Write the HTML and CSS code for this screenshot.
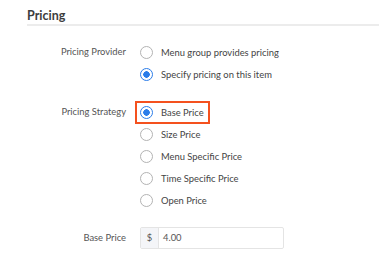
FILE: index.html
```html
<!DOCTYPE html>
<html>
<head>
<meta charset="utf-8">
<link rel="stylesheet" href="styles.css">
</head>
<body>
<section class="panel">
  <h2 class="title">Pricing</h2>
  <div class="field">
    <div class="label">Pricing Provider</div>
    <div class="options">
      <div class="option"><span class="radio"></span><span>Menu group provides pricing</span></div>
      <div class="option"><span class="radio checked"></span><span>Specify pricing on this item</span></div>
    </div>
  </div>
  <div class="field">
    <div class="label">Pricing Strategy</div>
    <div class="options">
      <div class="option highlight"><span class="radio checked"></span><span>Base Price</span></div>
      <div class="option"><span class="radio"></span><span>Size Price</span></div>
      <div class="option"><span class="radio"></span><span>Menu Specific Price</span></div>
      <div class="option"><span class="radio"></span><span>Time Specific Price</span></div>
      <div class="option"><span class="radio"></span><span>Open Price</span></div>
    </div>
  </div>
  <div class="field price-field">
    <div class="label">Base Price</div>
    <div class="input">
      <span class="prefix">$</span>
      <span class="value">4.00</span>
    </div>
  </div>
</section>
</body>
</html>
```

FILE: styles.css
```css
html, body {
  margin: 0;
  padding: 0;
  background: #fff;
}
body {
  font-family: Lato, "Open Sans", sans-serif;
  color: #444;
}
.panel {
  padding-left: 27px;
}
.title {
  margin: 0;
  height: 24px;
  line-height: 31px;
  font-size: 12.5px;
  font-weight: bold;
  color: #3d3d3d;
  border-bottom: 2px solid #ececec;
}
.field {
  display: grid;
  grid-template-columns: 99px 1fr;
  column-gap: 14px;
  margin-top: 16px;
}
.field:first-of-type {
  margin-top: 15px;
}
.label {
  text-align: right;
  font-size: 9.4px;
  line-height: 22px;
  color: #555;
}
.options {
  display: flex;
  flex-direction: column;
  align-items: flex-start;
}
.option {
  position: relative;
  display: flex;
  align-items: center;
  gap: 8px;
  height: 22px;
  font-size: 9.4px;
  color: #444;
}
.highlight::after {
  content: "";
  position: absolute;
  left: -5px;
  right: -6px;
  top: 0;
  bottom: -1px;
  border: 2px solid #f4511e;
}
.radio {
  box-sizing: border-box;
  width: 13px;
  height: 13px;
  border-radius: 50%;
  border: 1.5px solid #b3b3b3;
  background: #fff;
  flex: none;
}
.radio.checked {
  border-color: #2b7de9;
  background: radial-gradient(circle, #2b7de9 0 3px, #fff 3.5px);
}
.price-field {
  margin-top: 16px;
}
.input {
  display: flex;
  width: 144px;
  height: 22px;
  box-sizing: border-box;
  border: 1px solid #e4e4e4;
  border-radius: 2px;
  font-size: 9.4px;
  line-height: 20px;
}
.prefix {
  width: 17px;
  text-align: center;
  background: #f4f5f8;
  border-right: 1px solid #e4e4e4;
  color: #555;
}
.value {
  padding-left: 4px;
  color: #555;
}
```
